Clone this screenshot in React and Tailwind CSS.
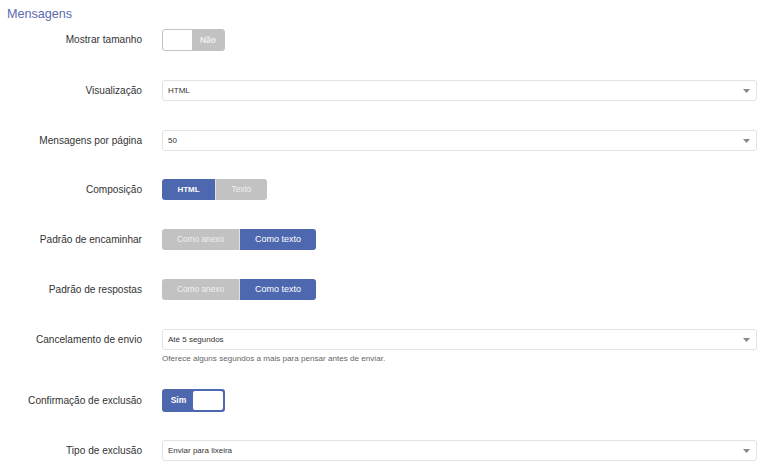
import React from "react";

const font = { fontFamily: '"Liberation Sans", Arial, sans-serif' };

function Caret() {
  return (
    <svg width="7" height="4" viewBox="0 0 7 4" className="absolute right-[6px] top-1/2 -translate-y-1/2">
      <path d="M0 0 L7 0 L3.5 4 Z" fill="#888" />
    </svg>
  );
}

function Select({ value }) {
  return (
    <div className="relative h-[21px] w-full border border-[#e2e2e2] rounded-[3px] bg-white flex items-center pl-[5px] text-[8px] text-[#333]">
      {value}
      <Caret />
    </div>
  );
}

function Row({ label, children, className = "" }) {
  return (
    <div className={"flex items-start " + className}>
      <div className="w-[142px] shrink-0 text-right text-[10.1px] text-[#333] h-[21px] leading-[21px]">{label}</div>
      <div className="ml-[20px] flex-1 mr-[11px]">{children}</div>
    </div>
  );
}

function Seg({ items, active, widths, bold }) {
  return (
    <div className="flex h-[21px] rounded-[3px] overflow-hidden w-fit">
      {items.map((it, i) => (
        <div
          key={it}
          style={{ width: widths[i] }}
          className={
            "flex items-center justify-center " +
            (i === active
              ? "bg-[#4d68ae] text-white " + (bold ? "font-bold text-[8px]" : "text-[9px]")
              : "bg-[#c2c2c2] text-[#f0f0f0] text-[8.3px]") +
            (i > 0 ? " border-l border-[#e0e0e0]" : "")
          }
        >
          {it}
        </div>
      ))}
    </div>
  );
}

export default function App() {
  return (
    <div style={font} className="w-[768px] h-[473px] bg-white overflow-hidden">
      <div className="pl-[7px] pt-[5px] h-[29px] text-[12.6px] text-[#5b6bb0] leading-[18px]">Mensagens</div>

      <Row label="Mostrar tamanho" className="h-[51px]">
        <div className="flex h-[22px] w-[63px] rounded-[3px] bg-[#c2c2c2] border border-[#c2c2c2] overflow-hidden">
          <div className="w-[29px] bg-white" />
          <div className="flex-1 flex items-center justify-center text-[8.5px] font-bold text-[#eeeeee]">Não</div>
        </div>
      </Row>

      <Row label="Visualização" className="h-[50px]">
        <Select value="HTML" />
      </Row>

      <Row label="Mensagens por página" className="h-[49px]">
        <Select value="50" />
      </Row>

      <Row label="Composição" className="h-[50px]">
        <Seg items={["HTML", "Texto"]} active={0} widths={[53, 52]} bold />
      </Row>

      <Row label="Padrão de encaminhar" className="h-[50px]">
        <Seg items={["Como anexo", "Como texto"]} active={1} widths={[77, 77]} />
      </Row>

      <Row label="Padrão de respostas" className="h-[50px]">
        <Seg items={["Como anexo", "Como texto"]} active={1} widths={[77, 77]} />
      </Row>

      <Row label="Cancelamento de envio" className="h-[60px]">
        <Select value="Até 5 segundos" />
        <div className="mt-[3px] text-[8.1px] text-[#666]">Oferece alguns segundos a mais para pensar antes de enviar.</div>
      </Row>

      <Row label="Confirmação de exclusão" className="h-[51px] pt-[1px]">
        <div className="flex h-[23px] w-[63px] rounded-[3px] bg-[#4d68ae] border-2 border-[#4d68ae] overflow-hidden -mt-[1px]">
          <div className="flex-1 flex items-center justify-center text-[8.5px] font-bold text-white">Sim</div>
          <div className="w-[30px] bg-white rounded-[2px]" />
        </div>
      </Row>

      <Row label="Tipo de exclusão" className="h-[50px]">
        <Select value="Enviar para lixeira" />
      </Row>
    </div>
  );
}
